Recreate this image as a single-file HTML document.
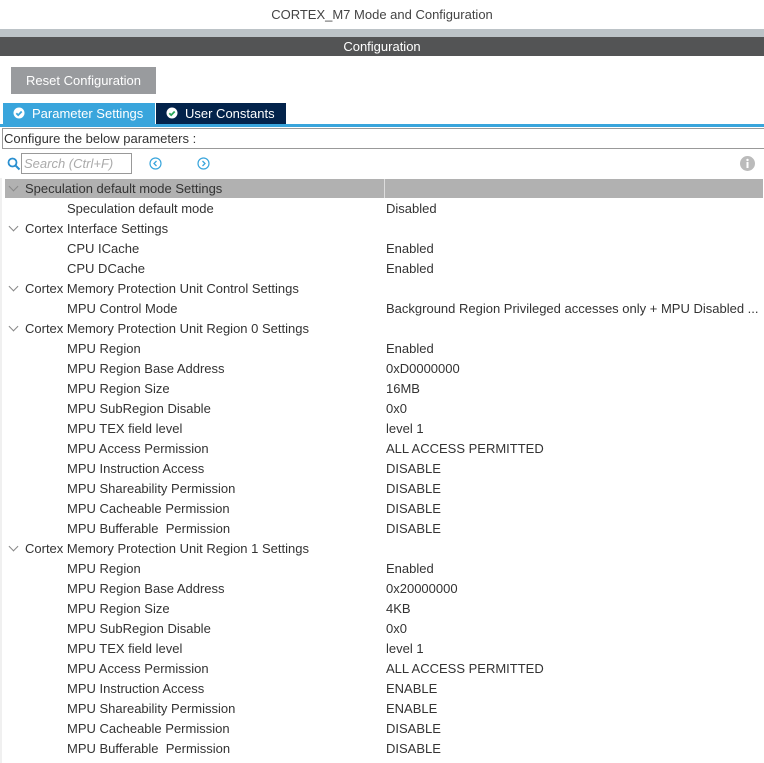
<!DOCTYPE html>
<html><head><style>
*{margin:0;padding:0;box-sizing:border-box}
body{width:764px;height:763px;overflow:hidden;background:#fff;font-family:"Liberation Sans",Arial,sans-serif;color:#333;font-size:13px;position:relative}
.a{position:absolute}
.row{position:absolute;left:5px;right:0;height:20px;line-height:22px;white-space:nowrap}
.row .k{position:absolute}
.row .v{position:absolute;left:381px}
.g .k{left:20px}
.i .k{left:62px}
.chev{position:absolute;left:5px;top:5px;width:7px;height:7px;border-right:1px solid #888;border-bottom:1px solid #888;transform:rotate(45deg)}
</style></head><body>
<div class="a" style="top:7px;left:0;width:764px;text-align:center;font-size:13px;color:#444">CORTEX_M7 Mode and Configuration</div>
<div class="a" style="top:29px;left:0;width:764px;height:8px;background:#bcc3c7"></div>
<div class="a" style="top:37px;left:0;width:764px;height:19px;background:#535455;color:#fff;text-align:center;line-height:19px">Configuration</div>
<div class="a" style="top:67px;left:11px;width:145px;height:27px;background:#999b9e;color:#fff;text-align:center;line-height:27px;font-size:13px">Reset Configuration</div>
<div class="a" style="top:103px;left:3px;width:152px;height:21px;background:#39a5dc;color:#fff;line-height:21px;padding-left:29px">Parameter Settings</div>
<div class="a" style="top:103px;left:156px;width:130px;height:21px;background:#03234b;color:#fff;line-height:21px;padding-left:29px">User Constants</div>
<svg class="a" style="left:13px;top:107px" width="12" height="12"><circle cx="6" cy="6" r="5.5" fill="#fff"/><path d="M3.3 6.2l1.9 1.9 3.5-3.6" stroke="#39a5dc" stroke-width="1.8" fill="none"/></svg>
<svg class="a" style="left:166px;top:107px" width="12" height="12"><circle cx="6" cy="6" r="5.5" fill="#fff"/><path d="M3.3 6.2l1.9 1.9 3.5-3.6" stroke="#2aa65a" stroke-width="1.8" fill="none"/></svg>
<div class="a" style="top:124px;left:0;width:764px;height:3px;background:#39a5dc"></div>
<div class="a" style="top:128px;left:2px;width:770px;height:21px;border:1px solid #999;line-height:20px;padding-left:1px">Configure the below parameters :</div>
<svg class="a" style="left:7px;top:157px" width="14" height="14"><circle cx="5.5" cy="5.5" r="4" stroke="#2a8fd0" stroke-width="1.8" fill="none"/><path d="M8.5 8.5l4 4" stroke="#2a8fd0" stroke-width="2"/></svg>
<div class="a" style="top:153px;left:21px;width:111px;height:21px;border:1px solid #999;line-height:20px;padding-left:2px;font-style:italic;color:#aaa">Search (Ctrl+F)</div>
<svg class="a" style="left:149px;top:157px" width="13" height="13"><circle cx="6.5" cy="6.5" r="5.5" stroke="#39a5dc" stroke-width="1.2" fill="none"/><path d="M7.5 4l-2.5 2.5 2.5 2.5" stroke="#39a5dc" stroke-width="1.3" fill="none"/></svg>
<svg class="a" style="left:197px;top:157px" width="13" height="13"><circle cx="6.5" cy="6.5" r="5.5" stroke="#39a5dc" stroke-width="1.2" fill="none"/><path d="M5.5 4l2.5 2.5-2.5 2.5" stroke="#39a5dc" stroke-width="1.3" fill="none"/></svg>
<svg class="a" style="left:740px;top:156px" width="15" height="15"><circle cx="7.5" cy="7.5" r="7.5" fill="#bbb"/><rect x="6.5" y="6" width="2" height="6" fill="#fff"/><circle cx="7.5" cy="4" r="1.2" fill="#fff"/></svg>
<div class="a" style="top:179px;left:5px;width:758px;height:19px;background:#b1b1b1"></div>
<div class="a" style="top:179px;left:384px;width:1px;height:19px;background:#ddd"></div>
<div class="row g" style="top:178px"><span class="chev"></span><span class="k">Speculation default mode Settings</span></div>
<div class="row i" style="top:198px"><span class="k">Speculation default mode</span><span class="v">Disabled</span></div>
<div class="row g" style="top:218px"><span class="chev"></span><span class="k">Cortex Interface Settings</span></div>
<div class="row i" style="top:238px"><span class="k">CPU ICache</span><span class="v">Enabled</span></div>
<div class="row i" style="top:258px"><span class="k">CPU DCache</span><span class="v">Enabled</span></div>
<div class="row g" style="top:278px"><span class="chev"></span><span class="k">Cortex Memory Protection Unit Control Settings</span></div>
<div class="row i" style="top:298px"><span class="k">MPU Control Mode</span><span class="v">Background Region Privileged accesses only + MPU Disabled ...</span></div>
<div class="row g" style="top:318px"><span class="chev"></span><span class="k">Cortex Memory Protection Unit Region 0 Settings</span></div>
<div class="row i" style="top:338px"><span class="k">MPU Region</span><span class="v">Enabled</span></div>
<div class="row i" style="top:358px"><span class="k">MPU Region Base Address</span><span class="v">0xD0000000</span></div>
<div class="row i" style="top:378px"><span class="k">MPU Region Size</span><span class="v">16MB</span></div>
<div class="row i" style="top:398px"><span class="k">MPU SubRegion Disable</span><span class="v">0x0</span></div>
<div class="row i" style="top:418px"><span class="k">MPU TEX field level</span><span class="v">level 1</span></div>
<div class="row i" style="top:438px"><span class="k">MPU Access Permission</span><span class="v">ALL ACCESS PERMITTED</span></div>
<div class="row i" style="top:458px"><span class="k">MPU Instruction Access</span><span class="v">DISABLE</span></div>
<div class="row i" style="top:478px"><span class="k">MPU Shareability Permission</span><span class="v">DISABLE</span></div>
<div class="row i" style="top:498px"><span class="k">MPU Cacheable Permission</span><span class="v">DISABLE</span></div>
<div class="row i" style="top:518px"><span class="k">MPU Bufferable &nbsp;Permission</span><span class="v">DISABLE</span></div>
<div class="row g" style="top:538px"><span class="chev"></span><span class="k">Cortex Memory Protection Unit Region 1 Settings</span></div>
<div class="row i" style="top:558px"><span class="k">MPU Region</span><span class="v">Enabled</span></div>
<div class="row i" style="top:578px"><span class="k">MPU Region Base Address</span><span class="v">0x20000000</span></div>
<div class="row i" style="top:598px"><span class="k">MPU Region Size</span><span class="v">4KB</span></div>
<div class="row i" style="top:618px"><span class="k">MPU SubRegion Disable</span><span class="v">0x0</span></div>
<div class="row i" style="top:638px"><span class="k">MPU TEX field level</span><span class="v">level 1</span></div>
<div class="row i" style="top:658px"><span class="k">MPU Access Permission</span><span class="v">ALL ACCESS PERMITTED</span></div>
<div class="row i" style="top:678px"><span class="k">MPU Instruction Access</span><span class="v">ENABLE</span></div>
<div class="row i" style="top:698px"><span class="k">MPU Shareability Permission</span><span class="v">ENABLE</span></div>
<div class="row i" style="top:718px"><span class="k">MPU Cacheable Permission</span><span class="v">DISABLE</span></div>
<div class="row i" style="top:738px"><span class="k">MPU Bufferable &nbsp;Permission</span><span class="v">DISABLE</span></div>
<div class="a" style="top:178px;left:0;width:2px;height:585px;background:#f0f0f0"></div>
</body></html>
